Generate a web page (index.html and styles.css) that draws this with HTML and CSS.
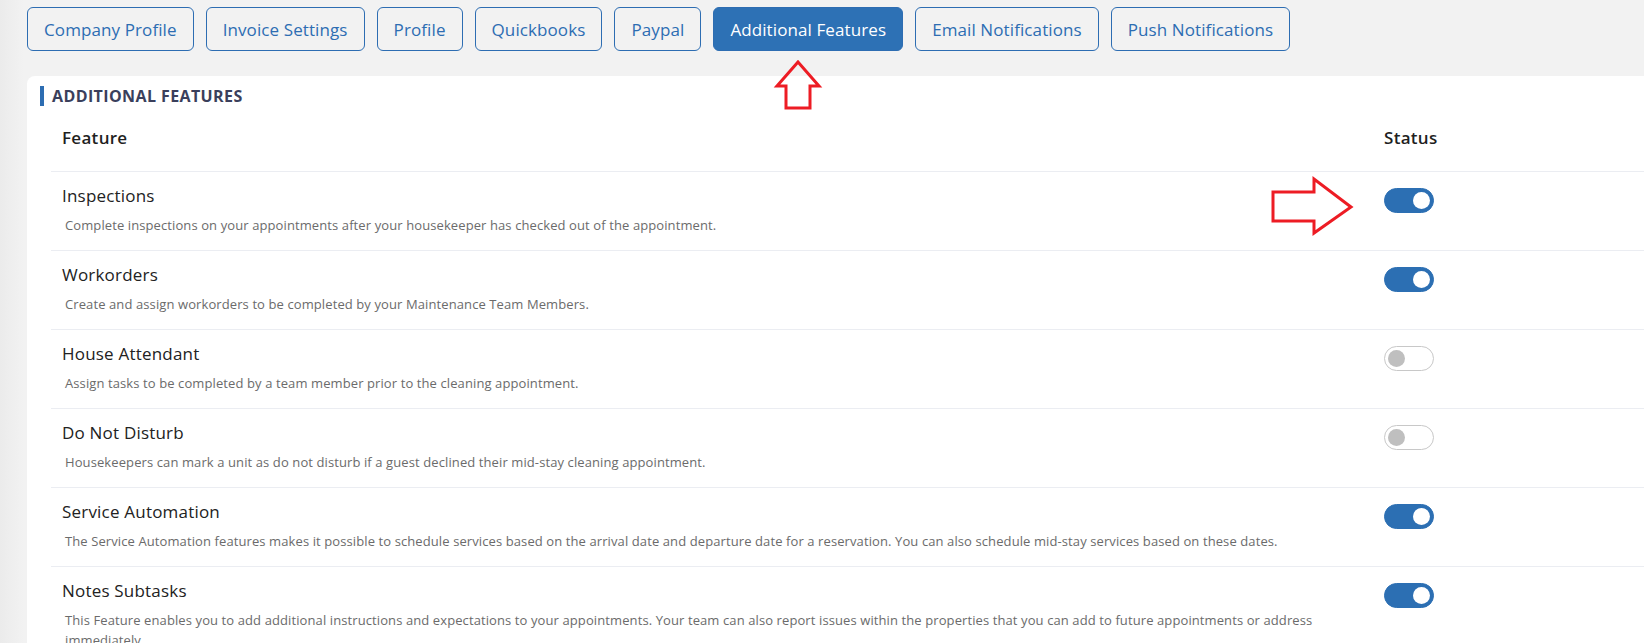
FILE: index.html
```html
<!DOCTYPE html>
<html>
<head>
  <meta charset="utf-8">
  <meta name="viewport" content="width=device-width, initial-scale=1">
  <title>Settings - Additional Features</title>
  <link rel="stylesheet" href="styles.css">
</head>
<body>
  <div class="tabs">
    <button class="tab">Company Profile</button>
    <button class="tab">Invoice Settings</button>
    <button class="tab">Profile</button>
    <button class="tab">Quickbooks</button>
    <button class="tab">Paypal</button>
    <button class="tab active">Additional Features</button>
    <button class="tab">Email Notifications</button>
    <button class="tab">Push Notifications</button>
  </div>

  <div class="card">
    <h2 class="card-title">ADDITIONAL FEATURES</h2>

    <div class="features">
      <div class="row head">
        <div class="col-feature">Feature</div>
        <div class="col-status">Status</div>
      </div>

      <div class="row">
        <div class="col-feature">
          <div class="feature-name">Inspections</div>
          <div class="feature-desc">Complete inspections on your appointments after your housekeeper has checked out of the appointment.</div>
        </div>
        <div class="col-status"><span class="switch on"></span></div>
      </div>

      <div class="row">
        <div class="col-feature">
          <div class="feature-name">Workorders</div>
          <div class="feature-desc">Create and assign workorders to be completed by your Maintenance Team Members.</div>
        </div>
        <div class="col-status"><span class="switch on"></span></div>
      </div>

      <div class="row">
        <div class="col-feature">
          <div class="feature-name">House Attendant</div>
          <div class="feature-desc">Assign tasks to be completed by a team member prior to the cleaning appointment.</div>
        </div>
        <div class="col-status"><span class="switch"></span></div>
      </div>

      <div class="row">
        <div class="col-feature">
          <div class="feature-name">Do Not Disturb</div>
          <div class="feature-desc">Housekeepers can mark a unit as do not disturb if a guest declined their mid-stay cleaning appointment.</div>
        </div>
        <div class="col-status"><span class="switch"></span></div>
      </div>

      <div class="row">
        <div class="col-feature">
          <div class="feature-name">Service Automation</div>
          <div class="feature-desc">The Service Automation features makes it possible to schedule services based on the arrival date and departure date for a reservation. You can also schedule mid-stay services based on these dates.</div>
        </div>
        <div class="col-status"><span class="switch on"></span></div>
      </div>

      <div class="row">
        <div class="col-feature">
          <div class="feature-name">Notes Subtasks</div>
          <div class="feature-desc">This Feature enables you to add additional instructions and expectations to your appointments. Your team can also report issues within the properties that you can add to future appointments or address immediately.</div>
        </div>
        <div class="col-status"><span class="switch on"></span></div>
      </div>
    </div>
  </div>

  <!-- red annotation arrows drawn over the page -->
  <svg class="annotations" width="1644" height="643" viewBox="0 0 1644 643">
    <polygon points="798,62 777,86 786,86 786,108 810,108 810,86 819,86" />
    <polygon points="1273,192 1314,192 1314,179 1351,207 1314,233 1314,221 1273,221" />
  </svg>
</body>
</html>
```

FILE: styles.css
```css
body {
  margin: 0;
  position: relative;
  overflow: hidden;
  height: 643px;
  font-family: "Open Sans", "Noto Sans", sans-serif;
  color: #222;
  background: linear-gradient(to right, #ebebeb 0, #f2f2f2 24px);
}

.tabs {
  display: flex;
  gap: 12px;
  padding: 7px 0 0 27px;
}

.tab {
  height: 44px;
  padding: 0 16px;
  border: 1px solid #2d6db2;
  border-radius: 6px;
  background: transparent;
  color: #2d6db2;
  font-family: inherit;
  font-size: 17px;
  letter-spacing: 0.1px;
  white-space: nowrap;
}

.tab.active {
  background: #2d71b5;
  color: #fff;
}

.card {
  width: 1700px;
  margin: 25px 0 0 27px;
  padding: 10px 0 0 13px;
  background: #fff;
  border-radius: 8px 0 0 0;
}

.card-title {
  margin: 0;
  padding-left: 8px;
  border-left: 4px solid #2d6db2;
  height: 20px;
  line-height: 20px;
  font-size: 16px;
  font-weight: 700;
  letter-spacing: 0.4px;
  color: #3a3f5c;
}

.features {
  margin: 2px 0 0 11px;
}

.row {
  display: flex;
  border-top: 1px solid #ebedf2;
}

.row.head {
  border-top: none;
  padding: 18px 0 21px;
  font-size: 17px;
  font-weight: 600;
  letter-spacing: 0.3px;
  line-height: 24px;
  color: #1f1f1f;
}

.col-feature {
  flex: 0 0 1321px;
  box-sizing: border-box;
  padding: 0 11px;
}

.col-status {
  padding-left: 12px;
}

.row:not(.head) .col-feature {
  padding-top: 12px;
  padding-bottom: 15px;
}

.row:not(.head) .col-status {
  padding-top: 16px;
}

.feature-name {
  font-size: 17px;
  letter-spacing: 0.2px;
  line-height: 24px;
  color: #222;
}

.feature-desc {
  margin-top: 7px;
  padding-left: 3px;
  font-size: 13px;
  letter-spacing: 0.1px;
  line-height: 20px;
  color: #6b6b6b;
}

.switch {
  display: block;
  position: relative;
  width: 50px;
  height: 25px;
  box-sizing: border-box;
  border: 1px solid #c8c8c8;
  border-radius: 13px;
  background: #fff;
}

.switch::after {
  content: "";
  position: absolute;
  top: 3px;
  left: 3px;
  width: 17px;
  height: 17px;
  border-radius: 50%;
  background: #bfbfbf;
}

.switch.on {
  border-color: #2c6fb3;
  background: #2c6fb3;
}

.switch.on::after {
  left: auto;
  right: 3px;
  background: #fff;
}

.annotations {
  position: absolute;
  top: 0;
  left: 0;
  pointer-events: none;
}

.annotations polygon {
  fill: none;
  stroke: #ed1c24;
  stroke-width: 3;
  stroke-linejoin: miter;
}
```
